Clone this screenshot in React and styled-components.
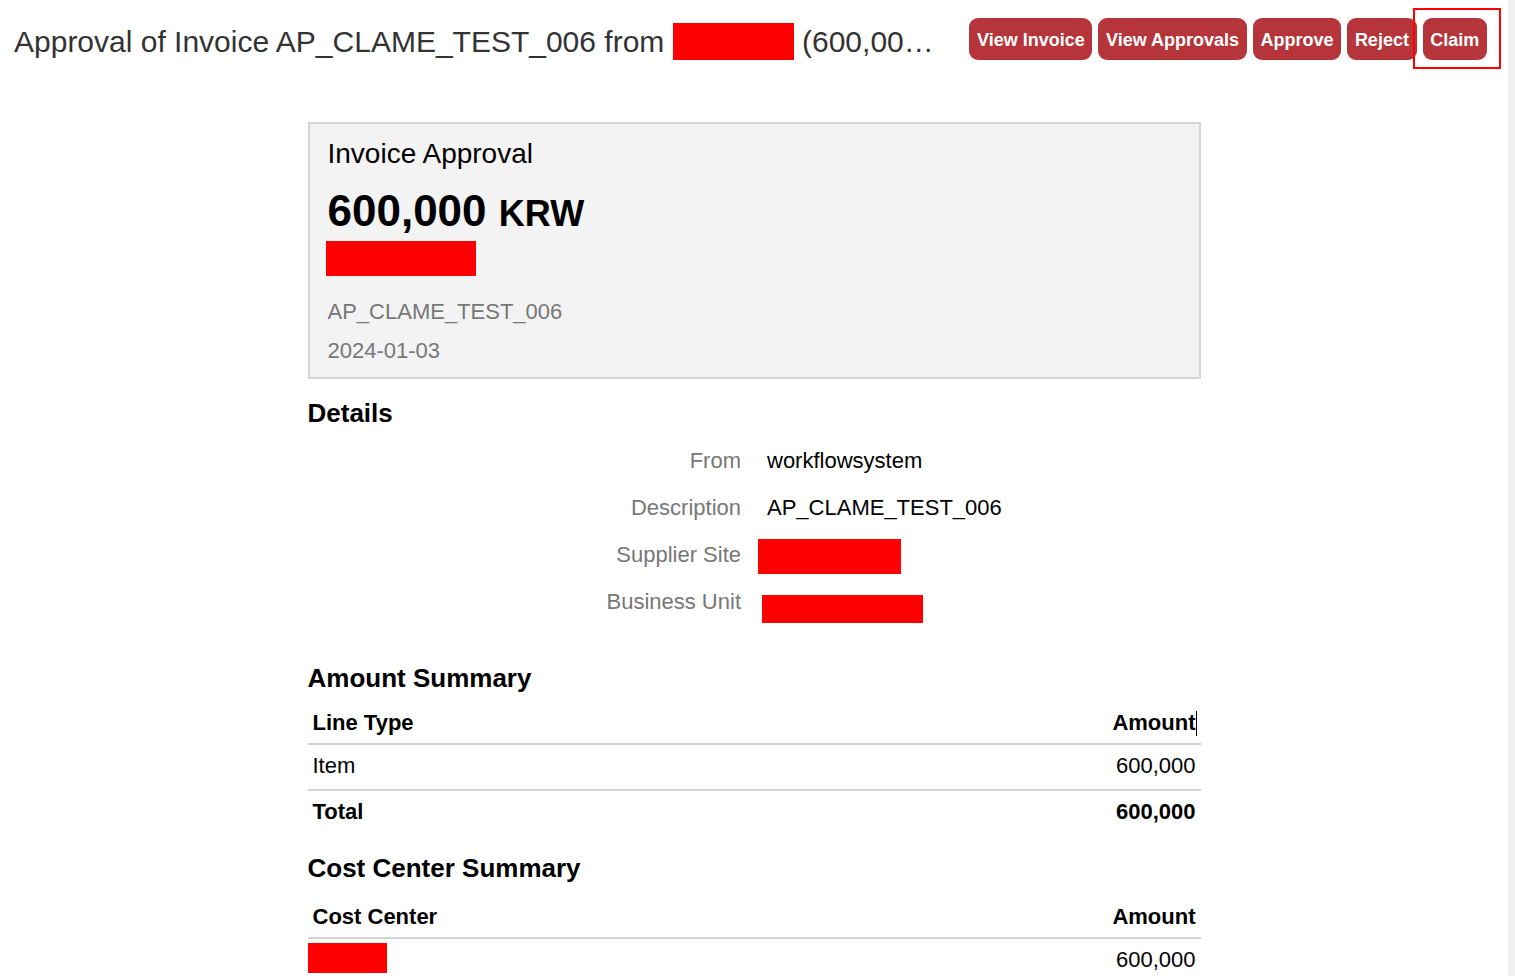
import React from "react";
import styled, { createGlobalStyle, css } from "styled-components";

const GlobalStyle = createGlobalStyle`
  body {
    margin: 0;
    background: #fff;
    color: #000;
    font-family: "Liberation Sans", Arial, sans-serif;
  }
`;

const Frame = styled.div`
  min-height: 100vh;
  box-sizing: border-box;
  border-right: 7px solid #f0f0f0;
`;

const Header = styled.header`
  display: flex;
  align-items: flex-start;
  gap: 24px;
  padding: 18px 21px 0 14px;
`;

const Title = styled.h1`
  flex: 1;
  min-width: 0;
  margin: 3px 0 0;
  font-size: 30px;
  font-weight: 400;
  line-height: 42px;
  color: #333;
  white-space: nowrap;
  overflow: hidden;
  text-overflow: ellipsis;
`;

const Redact = styled.span`
  display: ${(p) => (p.$block ? "block" : "inline-block")};
  width: ${(p) => p.$w}px;
  height: ${(p) => p.$h}px;
  background: #ff0000;
  vertical-align: ${(p) => p.$va || "middle"};
  margin-left: ${(p) => p.$ml || 0}px;
  margin-top: ${(p) => p.$mt || 0}px;
`;

const Actions = styled.div`
  display: flex;
  gap: 6px;
  flex-shrink: 0;
`;

const ActionButton = styled.button`
  position: relative;
  height: 42px;
  padding: 3px 7.7px 0;
  border: 0;
  border-radius: 9px;
  background: #b5353b;
  color: #fff;
  font-family: "Liberation Sans", Arial, sans-serif;
  font-size: 18px;
  font-weight: 700;
  white-space: nowrap;
  cursor: pointer;
  ${(p) =>
    p.$focused &&
    css`
      &::after {
        content: "";
        position: absolute;
        top: -10px;
        left: -10px;
        right: -14px;
        bottom: -9px;
        border: 2px solid #ff0000;
        pointer-events: none;
      }
    `}
`;

const Main = styled.main`
  max-width: 893px;
  margin: 59px auto 0;
  padding-bottom: 40px;
`;

const Card = styled.section`
  background: #f3f3f3;
  border: 2px solid #d4d4d4;
  padding: 14px 18px 7px;
`;

const CardTitle = styled.div`
  font-size: 28px;
  line-height: 32px;
`;

const AmountLine = styled.div`
  margin-top: 16px;
  font-size: 44px;
  font-weight: 700;
  line-height: 50px;
`;

const Currency = styled.span`
  font-size: 36px;
  line-height: 1;
`;

const Meta = styled.div`
  margin-top: ${(p) => p.$mt || 0}px;
  font-size: 22px;
  line-height: 39px;
  color: #777;
`;

const SectionHeading = styled.h2`
  margin: ${(p) => p.$mt}px 0 0;
  font-size: 26px;
  font-weight: 700;
  line-height: 30px;
`;

const DetailGrid = styled.dl`
  display: grid;
  grid-template-columns: 1fr 1fr;
  margin: 9px 0 0;
`;

const DetailLabel = styled.dt`
  display: flex;
  align-items: center;
  justify-content: flex-end;
  min-height: 47px;
  padding-right: 13px;
  font-size: 22px;
  line-height: 26px;
  color: #777;
`;

const DetailValue = styled.dd`
  display: flex;
  align-items: center;
  min-height: 47px;
  margin: 0;
  padding-left: 13px;
  font-size: 22px;
  line-height: 26px;
  color: #000;
`;

const Table = styled.table`
  width: 100%;
  border-collapse: collapse;
  margin-top: ${(p) => p.$mt}px;
`;

const Th = styled.th`
  padding: 9px 5px 7px;
  font-size: 22px;
  font-weight: 700;
  line-height: 26px;
  text-align: ${(p) => (p.$right ? "right" : "left")};
  border-bottom: 2px solid #d4d4d4;
`;

const Td = styled.td`
  padding: 8px 5px 10px;
  font-size: 22px;
  line-height: 26px;
  font-weight: ${(p) => (p.$bold ? 700 : 400)};
  text-align: ${(p) => (p.$right ? "right" : "left")};
  border-bottom: ${(p) => (p.$line ? "2px solid #d4d4d4" : "none")};
`;

const Caret = styled.span`
  display: inline-block;
  width: 1px;
  height: 25px;
  margin-right: -1px;
  background: #000;
  vertical-align: -6px;
`;

const details = [
  { label: "From", value: "workflowsystem" },
  { label: "Description", value: "AP_CLAME_TEST_006" },
  { label: "Supplier Site", redact: { w: 143, h: 35, ml: -9, mt: 4 } },
  { label: "Business Unit", redact: { w: 161, h: 28, ml: -5, mt: 15 } },
];

export default function App() {
  return (
    <Frame>
      <GlobalStyle />
      <Header>
        <Title>
          Approval of Invoice AP_CLAME_TEST_006 from{" "}
          <Redact $w={121} $h={37} $va="-8px" /> (600,000 KRW)
        </Title>
        <Actions>
          <ActionButton>View Invoice</ActionButton>
          <ActionButton>View Approvals</ActionButton>
          <ActionButton>Approve</ActionButton>
          <ActionButton>Reject</ActionButton>
          <ActionButton $focused>Claim</ActionButton>
        </Actions>
      </Header>

      <Main>
        <Card>
          <CardTitle>Invoice Approval</CardTitle>
          <AmountLine>
            600,000 <Currency>KRW</Currency>
          </AmountLine>
          <Redact $block $w={150} $h={35} $ml={-2} $mt={5} />
          <Meta $mt={16}>AP_CLAME_TEST_006</Meta>
          <Meta>2024-01-03</Meta>
        </Card>

        <SectionHeading $mt={19}>Details</SectionHeading>
        <DetailGrid>
          {details.map((d) => (
            <React.Fragment key={d.label}>
              <DetailLabel>{d.label}</DetailLabel>
              <DetailValue>
                {d.redact ? (
                  <Redact
                    $w={d.redact.w}
                    $h={d.redact.h}
                    $ml={d.redact.ml}
                    $mt={d.redact.mt}
                  />
                ) : (
                  d.value
                )}
              </DetailValue>
            </React.Fragment>
          ))}
        </DetailGrid>

        <SectionHeading $mt={38}>Amount Summary</SectionHeading>
        <Table $mt={8}>
          <thead>
            <tr>
              <Th>Line Type</Th>
              <Th $right>
                Amount
                <Caret />
              </Th>
            </tr>
          </thead>
          <tbody>
            <tr>
              <Td $line>Item</Td>
              <Td $line $right>
                600,000
              </Td>
            </tr>
            <tr>
              <Td $bold>Total</Td>
              <Td $bold $right>
                600,000
              </Td>
            </tr>
          </tbody>
        </Table>

        <SectionHeading $mt={18}>Cost Center Summary</SectionHeading>
        <Table $mt={12}>
          <thead>
            <tr>
              <Th>Cost Center</Th>
              <Th $right>Amount</Th>
            </tr>
          </thead>
          <tbody>
            <tr>
              <Td $line>
                <Redact $block $w={79} $h={30} $ml={-5} $mt={-4} />
              </Td>
              <Td $line $right>
                600,000
              </Td>
            </tr>
            <tr>
              <Td $bold>Total</Td>
              <Td $bold $right>
                600,000
              </Td>
            </tr>
          </tbody>
        </Table>
      </Main>
    </Frame>
  );
}
